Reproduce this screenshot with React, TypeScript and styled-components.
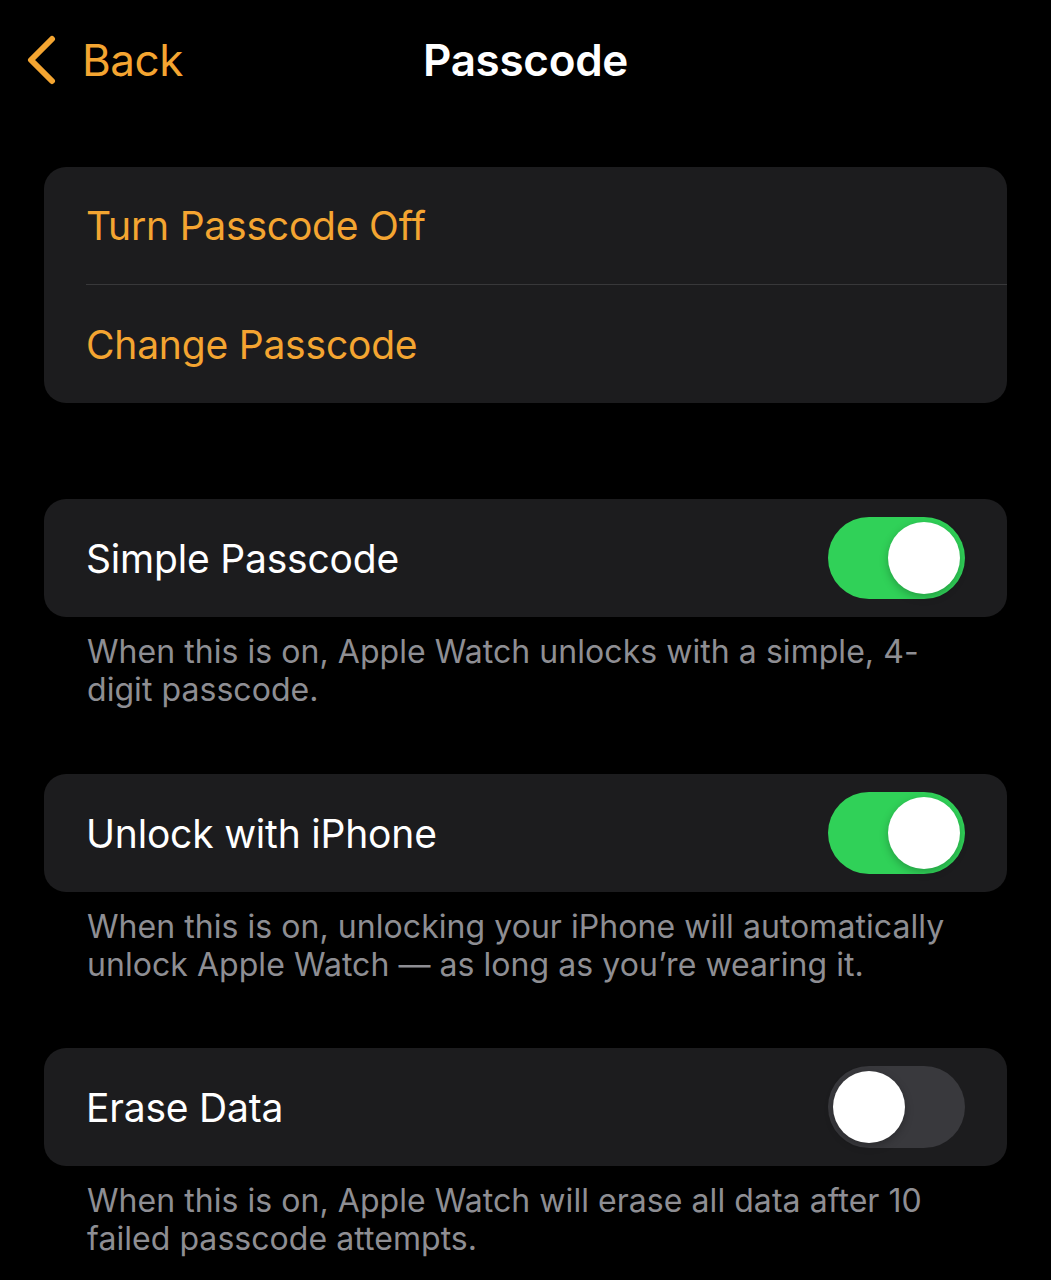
import { createGlobalStyle, styled } from "styled-components";

const GlobalStyle = createGlobalStyle`
  body {
    margin: 0;
    background: #000;
    font-family: Inter, "Noto Sans", sans-serif;
    -webkit-font-smoothing: antialiased;
  }
`;

const Page = styled.div`
  width: 1051px;
  min-height: 1280px;
  background: #000;
  padding: 0 44px;
  box-sizing: border-box;
`;

const NavBar = styled.div`
  height: 120px;
  display: grid;
  grid-template-columns: 1fr auto 1fr;
  align-items: center;
  margin: 0 -44px;
  padding: 0 24px;
`;

const BackButton = styled.div`
  display: flex;
  align-items: center;
  gap: 24px;
  color: #f4a531;
  font-size: 44px;
  letter-spacing: -0.5px;
`;

const Title = styled.div`
  color: #fff;
  font-size: 44px;
  font-weight: 600;
  letter-spacing: -0.3px;
`;

const Card = styled.div<{ $top: number }>`
  margin-top: ${(p) => p.$top}px;
  background: #1c1c1e;
  border-radius: 22px;
  overflow: hidden;
`;

const Row = styled.div<{ $divider?: boolean }>`
  height: 118px;
  display: flex;
  align-items: center;
  justify-content: space-between;
  margin-left: 42px;
  padding-right: 42px;
  border-bottom: ${(p) => (p.$divider ? "1px solid #38383a" : "none")};
  box-sizing: border-box;
`;

const Label = styled.span<{ $accent?: boolean }>`
  color: ${(p) => (p.$accent ? "#f4a531" : "#fff")};
  font-size: 39px;
  letter-spacing: -0.2px;
`;

const Footer = styled.p`
  margin: 16px 0 0 43px;
  padding-right: 60px;
  color: #8e8e93;
  font-size: 32px;
  line-height: 38px;
  letter-spacing: 0.05px;
`;

const Track = styled.div<{ $on: boolean }>`
  width: 137px;
  height: 82px;
  border-radius: 41px;
  background: ${(p) => (p.$on ? "#30d158" : "#39393d")};
  display: flex;
  align-items: center;
  justify-content: ${(p) => (p.$on ? "flex-end" : "flex-start")};
  padding: 0 5px;
  box-sizing: border-box;
`;

const Knob = styled.div`
  width: 72px;
  height: 72px;
  border-radius: 50%;
  background: #fff;
  box-shadow: 0 3px 8px rgba(0, 0, 0, 0.25);
`;

function Toggle({ on }: { on: boolean }) {
  return (
    <Track $on={on}>
      <Knob />
    </Track>
  );
}

const settings = [
  {
    label: "Simple Passcode",
    on: true,
    note: "When this is on, Apple Watch unlocks with a simple, 4-digit passcode.",
    top: 96,
  },
  {
    label: "Unlock with iPhone",
    on: true,
    note: "When this is on, unlocking your iPhone will automatically unlock Apple Watch — as long as you’re wearing it.",
    top: 65,
  },
  {
    label: "Erase Data",
    on: false,
    note: "When this is on, Apple Watch will erase all data after 10 failed passcode attempts.",
    top: 64,
  },
];

export default function App() {
  return (
    <>
      <GlobalStyle />
      <Page>
        <NavBar>
          <BackButton>
            <svg width="34" height="50" viewBox="0 0 34 50">
              <path
                d="M28 4 L7 25 L28 46"
                fill="none"
                stroke="#f4a531"
                strokeWidth="6"
                strokeLinecap="round"
                strokeLinejoin="round"
              />
            </svg>
            Back
          </BackButton>
          <Title>Passcode</Title>
          <div />
        </NavBar>

        <Card $top={47}>
          <Row $divider>
            <Label $accent>Turn Passcode Off</Label>
          </Row>
          <Row>
            <Label $accent>Change Passcode</Label>
          </Row>
        </Card>

        {settings.map((s) => (
          <div key={s.label}>
            <Card $top={s.top}>
              <Row>
                <Label>{s.label}</Label>
                <Toggle on={s.on} />
              </Row>
            </Card>
            <Footer>{s.note}</Footer>
          </div>
        ))}
      </Page>
    </>
  );
}
